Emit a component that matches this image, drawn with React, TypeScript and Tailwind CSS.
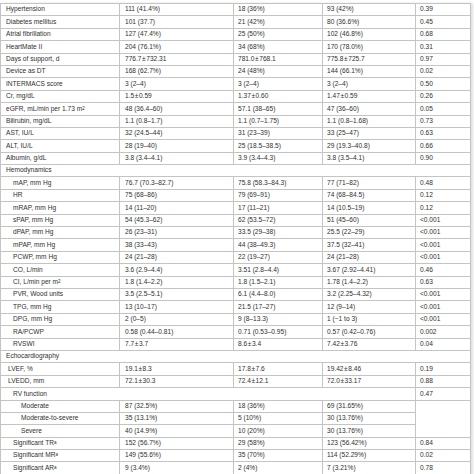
import React from 'react';

type Row =
  | { kind: 'data'; label: React.ReactNode; indent?: number; a: React.ReactNode; b: string; c: string; p: string }
  | { kind: 'section'; label: string }
  | { kind: 'group'; label: string; indent?: number; p: string }
  | { kind: 'sub'; label: string; a: string; b: string; c: string; first?: boolean };

const sup = (t: string) => <sup className="text-[4.5px] relative -top-[1px]">{t}</sup>;

// mean ± sd, with hair spaces like the typeset table
const pm = (a: string, b: string) => `${a}\u200a±\u200a${b}`;

const rows: Row[] = [
  { kind: 'data', label: 'Hypertension', a: '111 (41.4%)', b: '18 (36%)', c: '93 (42%)', p: '0.39' },
  { kind: 'data', label: 'Diabetes mellitus', a: '101 (37.7)', b: '21 (42%)', c: '80 (36.6%)', p: '0.45' },
  { kind: 'data', label: 'Atrial fibrillation', a: '127 (47.4%)', b: '25 (50%)', c: '102 (46.8%)', p: '0.68' },
  { kind: 'data', label: 'HeartMate II', a: '204 (76.1%)', b: '34 (68%)', c: '170 (78.0%)', p: '0.31' },
  { kind: 'data', label: 'Days of support, d', a: pm('776.7', '732.31'), b: pm('781.0', '768.1'), c: pm('775.8', '725.7'), p: '0.97' },
  { kind: 'data', label: 'Device as DT', a: '168 (62.7%)', b: '24 (48%)', c: '144 (66.1%)', p: '0.02' },
  { kind: 'data', label: 'INTERMACS score', a: '3 (2–4)', b: '3 (2–4)', c: '3 (2–4)', p: '0.50' },
  { kind: 'data', label: 'Cr, mg/dL', a: pm('1.5', '0.59'), b: pm('1.37', '0.60'), c: pm('1.47', '0.59'), p: '0.26' },
  { kind: 'data', label: <>eGFR, mL/min per 1.73 m{sup('2')}</>, a: '48 (36.4–60)', b: '57.1 (38–65)', c: '47 (36–60)', p: '0.05' },
  { kind: 'data', label: 'Bilirubin, mg/dL', a: '1.1 (0.8–1.7)', b: '1.1 (0.7–1.75)', c: '1.1 (0.8–1.68)', p: '0.73' },
  { kind: 'data', label: 'AST, IU/L', a: '32 (24.5–44)', b: '31 (23–39)', c: '33 (25–47)', p: '0.63' },
  { kind: 'data', label: 'ALT, IU/L', a: '28 (19–40)', b: '25 (18.5–38.5)', c: '29 (19.3–40.8)', p: '0.66' },
  { kind: 'data', label: 'Albumin, g/dL', a: '3.8 (3.4–4.1)', b: '3.9 (3.4–4.3)', c: '3.8 (3.5–4.1)', p: '0.90' },
  { kind: 'section', label: 'Hemodynamics' },
  { kind: 'data', indent: 1, label: 'mAP, mm Hg', a: '76.7 (70.3–82.7)', b: '75.8 (58.3–84.3)', c: '77 (71–82)', p: '0.48' },
  { kind: 'data', indent: 1, label: 'HR', a: '75 (68–86)', b: '79 (69–91)', c: '74 (68–84.5)', p: '0.12' },
  { kind: 'data', indent: 1, label: 'mRAP, mm Hg', a: '14 (11–20)', b: '17 (11–21)', c: '14 (10.5–19)', p: '0.12' },
  { kind: 'data', indent: 1, label: 'sPAP, mm Hg', a: '54 (45.3–62)', b: '62 (53.5–72)', c: '51 (45–60)', p: '<0.001' },
  { kind: 'data', indent: 1, label: 'dPAP, mm Hg', a: '26 (23–31)', b: '33.5 (29–38)', c: '25.5 (22–29)', p: '<0.001' },
  { kind: 'data', indent: 1, label: 'mPAP, mm Hg', a: '38 (33–43)', b: '44 (38–49.3)', c: '37.5 (32–41)', p: '<0.001' },
  { kind: 'data', indent: 1, label: 'PCWP, mm Hg', a: '24 (21–28)', b: '22 (19–27)', c: '24 (21–28)', p: '<0.001' },
  { kind: 'data', indent: 1, label: 'CO, L/min', a: '3.6 (2.9–4.4)', b: '3.51 (2.8–4.4)', c: '3.67 (2.92–4.41)', p: '0.46' },
  { kind: 'data', indent: 1, label: <>CI, L/min per m{sup('2')}</>, a: '1.8 (1.4–2.2)', b: '1.8 (1.5–2.1)', c: '1.78 (1.4–2.2)', p: '0.63' },
  { kind: 'data', indent: 1, label: 'PVR, Wood units', a: '3.5 (2.5–5.1)', b: '6.1 (4.4–8.0)', c: '3.2 (2.25–4.32)', p: '<0.001' },
  { kind: 'data', indent: 1, label: 'TPG, mm Hg', a: '13 (10–17)', b: '21.5 (17–27)', c: '12 (9–14)', p: '<0.001' },
  { kind: 'data', indent: 1, label: 'DPG, mm Hg', a: '2 (0–5)', b: '9 (8–13.3)', c: '1 (−1 to 3)', p: '<0.001' },
  { kind: 'data', indent: 1, label: 'RA/PCWP', a: '0.58 (0.44–0.81)', b: '0.71 (0.53–0.95)', c: '0.57 (0.42–0.76)', p: '0.002' },
  { kind: 'data', indent: 1, label: 'RVSWI', a: pm('7.7', '3.7'), b: pm('8.6', '3.4'), c: pm('7.42', '3.76'), p: '0.04' },
  { kind: 'section', label: 'Echocardiography' },
  { kind: 'data', indent: 0.3, label: 'LVEF, %', a: pm('19.1', '8.3'), b: pm('17.8', '7.6'), c: pm('19.42', '8.46'), p: '0.19' },
  { kind: 'data', indent: 0.3, label: 'LVEDD, mm', a: pm('72.1', '30.3'), b: pm('72.4', '12.1'), c: pm('72.0', '33.17'), p: '0.88' },
  { kind: 'group', indent: 1, label: 'RV function', p: '0.47' },
  { kind: 'sub', first: true, label: 'Moderate', a: '87 (32.5%)', b: '18 (36%)', c: '69 (31.65%)' },
  { kind: 'sub', label: 'Moderate-to-severe', a: '35 (13.1%)', b: '5 (10%)', c: '30 (13.76%)' },
  { kind: 'sub', label: 'Severe', a: '40 (14.9%)', b: '10 (20%)', c: '30 (13.76%)' },
  { kind: 'data', indent: 1, label: <>Significant TR{sup('a')}</>, a: '152 (56.7%)', b: '29 (58%)', c: '123 (56.42%)', p: '0.84' },
  { kind: 'data', indent: 1, label: <>Significant MR{sup('a')}</>, a: '149 (55.6%)', b: '35 (70%)', c: '114 (52.29%)', p: '0.02' },
  { kind: 'data', indent: 1, label: <>Significant AR{sup('a')}</>, a: '9 (3.4%)', b: '2 (4%)', c: '7 (3.21%)', p: '0.78' },
];

const cell = 'border border-[#c4c4c4] pl-[4px] p-0 align-middle whitespace-nowrap';
const pad = (indent?: number) =>
  indent === 1 ? 'pl-[12px]' : indent === 0.3 ? 'pl-[7px]' : 'pl-[5px]';

export default function App() {
  return (
    <div className="w-[474px] h-[474px] overflow-hidden bg-white pt-[3px] text-[#2f2f2f]" style={{ fontFamily: '"Liberation Sans", Arial, sans-serif' }}>
      <table className="border-collapse table-fixed w-[470px] text-[6.6px] leading-none border-r-[1.5px] border-r-[#8a8a8a] shadow-[2px_0_2px_rgba(0,0,0,0.12)]">
        <colgroup>
          <col className="w-[119px]" />
          <col className="w-[114px]" />
          <col className="w-[89px]" />
          <col className="w-[93px]" />
          <col className="w-[55px]" />
        </colgroup>
        <tbody>
          {rows.map((r, i) => {
            if (r.kind === 'section') {
              return (
                <tr key={i} className="h-[12.4px]">
                  <td colSpan={5} className={`${cell} pl-[5px]`}>{r.label}</td>
                </tr>
              );
            }
            if (r.kind === 'group') {
              return (
                <tr key={i} className="h-[12.4px]">
                  <td colSpan={4} className={`${cell} pl-[12px]`}>{r.label}</td>
                  <td className={cell}>{r.p}</td>
                </tr>
              );
            }
            if (r.kind === 'sub') {
              return (
                <tr key={i} className="h-[12.4px]">
                  <td className={`${cell} pl-[20px]`}>{r.label}</td>
                  <td className={`${cell} pl-[5px]`}>{r.a}</td>
                  <td className={cell}>{r.b}</td>
                  <td className={cell}>{r.c}</td>
                  {r.first && <td rowSpan={3} className={cell}></td>}
                </tr>
              );
            }
            return (
              <tr key={i} className="h-[12.4px]">
                <td className={`${cell} ${pad(r.indent)}`}>{r.label}</td>
                <td className={`${cell} pl-[5px]`}>{r.a}</td>
                <td className={cell}>{r.b}</td>
                <td className={cell}>{r.c}</td>
                <td className={cell}>{r.p}</td>
              </tr>
            );
          })}
        </tbody>
      </table>
    </div>
  );
}
